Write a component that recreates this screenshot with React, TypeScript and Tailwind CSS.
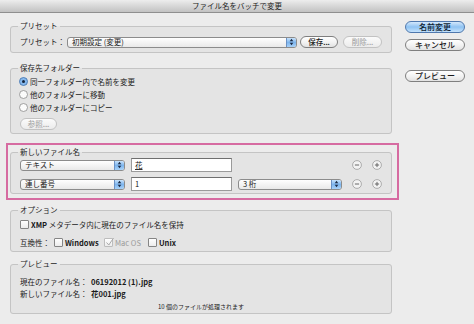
import type { ReactNode } from 'react'

// Aqua-style "batch rename" dialog

function Group({ title, className = '', children }: { title: string; className?: string; children: ReactNode }) {
  return (
    <fieldset className={`w-[382px] rounded-[3px] border border-[#c4c4c4] bg-[#e4e4e4] p-0 ${className}`}>
      <legend className="ml-[7px] px-[2px] text-[7.5px] leading-[12px] text-[#1c1c1c]">{title}</legend>
      {children}
    </fieldset>
  )
}

function Pill({
  children,
  className = '',
  disabled,
  primary,
}: {
  children: ReactNode
  className?: string
  disabled?: boolean
  primary?: boolean
}) {
  const tone = primary
    ? 'border-[#4f78ad] bg-gradient-to-b from-[#d3e8fc] via-[#8fc3f2] to-[#c4e2fc] text-[#0d1b2e]'
    : disabled
      ? 'border-[#c2c2c2] bg-gradient-to-b from-[#fbfbfb] to-[#ececec] text-[#a8a8a8]'
      : 'border-[#7f7f7f] bg-gradient-to-b from-white via-[#f3f3f3] to-[#e2e2e2] text-[#1a1a1a]'
  return (
    <div
      className={`flex h-[12px] items-center justify-center whitespace-nowrap rounded-full border text-[7.5px] leading-none font-medium ${tone} ${className}`}
    >
      {children}
    </div>
  )
}

function Popup({ label, className = '' }: { label: string; className?: string }) {
  return (
    <div
      className={`flex h-[11px] items-center overflow-hidden rounded-[3px] border border-[#8c8c8c] bg-gradient-to-b from-white to-[#e9e9e9] ${className}`}
    >
      <span className="flex-1 whitespace-nowrap pl-[4px] text-[7.5px] leading-none text-[#1a1a1a]">{label}</span>
      <span className="flex h-full w-[10px] items-center justify-center border-l border-[#6b91c4] bg-gradient-to-b from-[#c7e2fb] via-[#7db5ee] to-[#a9d2f8]">
        <svg width="5" height="8" viewBox="0 0 5 8">
          <path d="M2.5 0.8 L4.3 3.2 H0.7 Z" fill="#1c2b45" />
          <path d="M2.5 7.2 L4.3 4.8 H0.7 Z" fill="#1c2b45" />
        </svg>
      </span>
    </div>
  )
}

function Radio({ on }: { on?: boolean }) {
  return (
    <svg width="9" height="9" viewBox="0 0 9 9" className="shrink-0">
      <circle
        cx="4.5"
        cy="4.5"
        r="4"
        fill={on ? '#86b8ec' : '#fbfbfb'}
        stroke={on ? '#3e6da9' : '#8a8a8a'}
        strokeWidth="0.8"
      />
      {on && <circle cx="4.5" cy="4.5" r="1.5" fill="#15233a" />}
    </svg>
  )
}

function Check({ checked, disabled }: { checked?: boolean; disabled?: boolean }) {
  return (
    <span
      className={`relative flex h-[9px] w-[9px] shrink-0 rounded-[1px] border bg-gradient-to-b from-white to-[#ececec] ${
        disabled ? 'border-[#bdbdbd]' : 'border-[#858585]'
      }`}
    >
      {checked && (
        <svg width="10" height="10" viewBox="0 0 10 10" className="absolute -top-[2px] left-0 overflow-visible">
          <path d="M1.5 5.5 L3.8 8 L8.5 1" fill="none" stroke={disabled ? '#a9a9a9' : '#222'} strokeWidth="1" />
        </svg>
      )}
    </span>
  )
}

function RoundBtn({ plus }: { plus?: boolean }) {
  return (
    <svg width="10" height="10" viewBox="0 0 10 10" className="shrink-0">
      <circle cx="5" cy="5" r="4.4" fill="#f3f3f3" stroke="#9c9c9c" strokeWidth="0.8" />
      <path d="M2.9 5 H7.1" stroke="#5a5a5a" strokeWidth="0.9" />
      {plus && <path d="M5 2.9 V7.1" stroke="#5a5a5a" strokeWidth="0.9" />}
    </svg>
  )
}

function Field({ value, ime }: { value: string; ime?: boolean }) {
  return (
    <div className="flex h-[14px] w-[101px] items-center border border-[#9a9a9a] border-t-[#6f6f6f] bg-white pl-[3px] text-[7.5px] leading-none text-[#111]">
      <span className={ime ? 'underline decoration-[#333] underline-offset-[1px]' : ''}>{value}</span>
    </div>
  )
}

export default function App() {
  return (
    <div className="h-[324px] w-[474px] overflow-hidden whitespace-nowrap bg-[#ececec] font-['Noto_Sans_CJK_JP',sans-serif] text-[7.5px] text-[#1a1a1a]">
      <div className="flex h-[13px] items-center justify-center border-b border-[#8f8f8f] bg-gradient-to-b from-[#ededed] to-[#c2c2c2] text-[7.5px] leading-none text-[#1a1a1a]">
        ファイル名をバッチで変更
      </div>

      <div className="flex pl-[10px] pt-[7px]">
        <div className="w-[382px]">
          <Group title="プリセット">
            <div className="mt-[4px] mb-[4px] flex h-[12px] items-center px-[9px]">
              <span className="w-[47px] leading-none">プリセット：</span>
              <Popup label="初期設定 (変更)" className="w-[230px]" />
              <Pill className="ml-[3px] w-[38px]">保存...</Pill>
              <Pill disabled className="ml-[5px] w-[39px]">
                削除...
              </Pill>
            </div>
          </Group>

          <Group title="保存先フォルダー" className="mt-[9px]">
            <div className="flex flex-col px-[8px] pt-[1px] pb-[3px]">
              <div className="flex h-[13px] items-center gap-[2px]">
                <Radio on />
                <span className="leading-none">同一フォルダー内で名前を変更</span>
              </div>
              <div className="flex h-[13px] items-center gap-[2px]">
                <Radio />
                <span className="leading-none">他のフォルダーに移動</span>
              </div>
              <div className="flex h-[13px] items-center gap-[2px]">
                <Radio />
                <span className="leading-none">他のフォルダーにコピー</span>
              </div>
              <Pill disabled className="mt-[4px] ml-[1px] w-[37px]">
                参照...
              </Pill>
            </div>
          </Group>

          <div className="-ml-[4px] mt-[9px] w-[393px] border-2 border-[#d66ba1] pt-[1px] pb-[4px] pl-[2px]">
            <Group title="新しいファイル名">
              <div className="flex flex-col gap-[5px] px-[8px] pb-[2px]">
                <div className="flex h-[14px] items-center">
                  <Popup label="テキスト" className="ml-[1px] w-[105px]" />
                  <div className="ml-[6px]">
                    <Field value="花" ime />
                  </div>
                  <div className="ml-[6px] w-[104px]" />
                  <div className="ml-[10px] flex gap-[10px]">
                    <RoundBtn />
                    <RoundBtn plus />
                  </div>
                </div>
                <div className="flex h-[14px] items-center">
                  <Popup label="連し番号" className="ml-[1px] w-[105px]" />
                  <div className="ml-[6px]">
                    <Field value="1" />
                  </div>
                  <Popup label="3 桁" className="ml-[6px] w-[104px]" />
                  <div className="ml-[10px] flex gap-[10px]">
                    <RoundBtn />
                    <RoundBtn plus />
                  </div>
                </div>
              </div>
            </Group>
          </div>

          <Group title="オプション" className="mt-[4px]">
            <div className="flex flex-col gap-[5px] px-[9px] pt-[2px] pb-[2px]">
              <div className="flex h-[13px] items-center gap-[2px]">
                <Check />
                <span className="leading-none">
                  <span className="font-semibold">XMP</span> メタデータ内に現在のファイル名を保持
                </span>
              </div>
              <div className="flex h-[13px] items-center">
                <span className="w-[34px] leading-none">互換性：</span>
                <Check />
                <span className="ml-[2px] w-[39px] leading-none font-semibold">Windows</span>
                <Check checked disabled />
                <span className="ml-[2px] w-[33px] leading-none text-[#9a9a9a]">Mac OS</span>
                <Check />
                <span className="ml-[2px] leading-none font-semibold">Unix</span>
              </div>
            </div>
          </Group>

          <Group title="プレビュー" className="mt-[6px]">
            <div className="flex flex-col px-[9px] pt-[6px] pb-[1px]">
              <div className="flex h-[12px] items-center">
                <span className="w-[71px] leading-none">現在のファイル名：</span>
                <span className="leading-none font-bold">06192012 (1).jpg</span>
              </div>
              <div className="flex h-[12px] items-center">
                <span className="w-[71px] leading-none">新しいファイル名：</span>
                <span className="leading-none font-bold">花001.jpg</span>
              </div>
              <div className="mt-[2px] h-[10px] text-center text-[6px] leading-[10px]">10 個のファイルが処理されます</div>
            </div>
          </Group>
        </div>

        <div className="ml-[13px] flex w-[60px] flex-col pt-[1px]">
          <Pill primary className="text-[8px]">
            名前変更
          </Pill>
          <Pill className="mt-[6px] text-[8px]">キャンセル</Pill>
          <Pill className="mt-[19px] text-[8px]">プレビュー</Pill>
        </div>
      </div>
    </div>
  )
}
